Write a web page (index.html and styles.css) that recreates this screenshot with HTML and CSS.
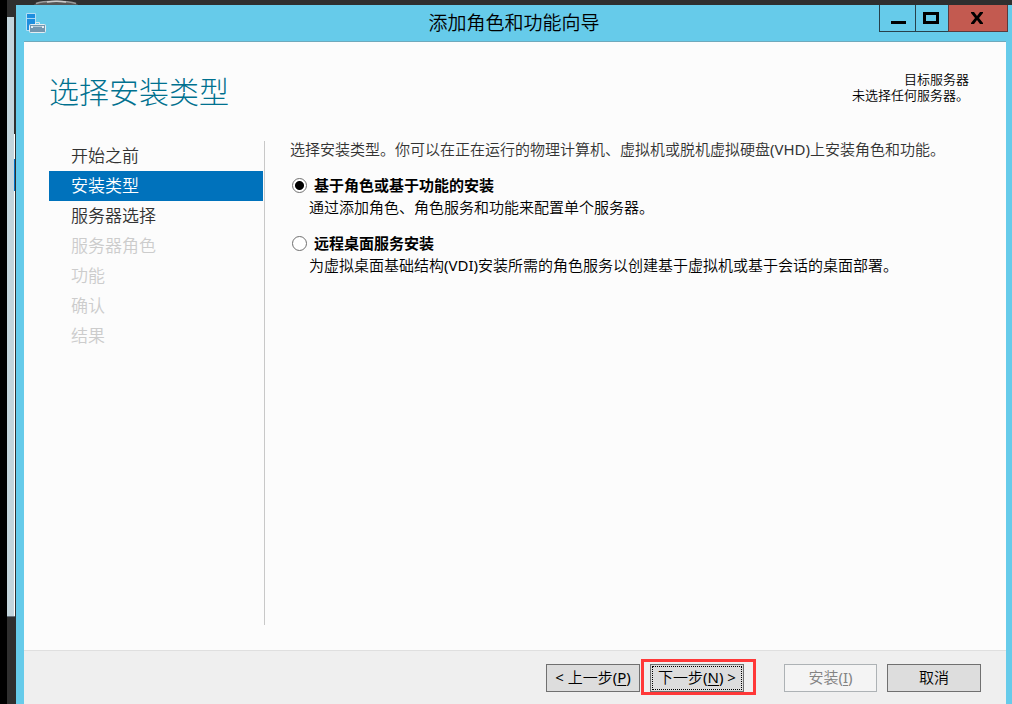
FILE: index.html
```html
<!DOCTYPE html>
<html lang="zh-CN">
<head>
  <meta charset="UTF-8" />
  <title>添加角色和功能向导</title>
  <link rel="stylesheet" href="styles.css">
</head>
<body>

  <div class="desktop">
    <div class="back">
      <div class="back-window"></div>
      <svg class="back-arc" width="46" height="5" viewBox="0 0 46 5">
        <ellipse cx="23" cy="5" rx="22" ry="4" fill="#555"/>
        <path d="M3 3.500C10 .5 34 .5 43 3.500" fill="none" stroke="#999" stroke-width="1.500"/>
        <path d="M14 2C20 1 28 1 33 2" fill="none" stroke="#ccc" stroke-width="1.500"/>
      </svg>
    </div>

    <div class="window">
      <header class="titlebar">
        <svg class="app-icon" width="20" height="20" viewBox="0 0 20 20">
          <path d="M.5.5h9v17h-9z" fill="#1e8ede" stroke="#b4def5"/>
          <path d="M1 5.500h8" stroke="#a8d8f5"/>
          <path d="M9.500 12V9.500h4V12" fill="none" stroke="#dbe8ef"/>
          <rect x="3.500" y="11.500" width="16" height="8" rx="1" fill="#7397b0" stroke="#e4edf2"/>
          <path d="M5 13.500h13" stroke="#b4cad6"/>
          <path d="M5 13h2v2H5zM16 13h2v2h-2z" fill="#e4edf2"/>
        </svg>
        <h1 class="window-title">添加角色和功能向导</h1>
        <div class="controls">
          <button class="control" type="button" aria-label="最小化">
            <svg width="16" height="14" viewBox="0 0 16 14"><path d="M1 10h15v3H1z"/></svg>
          </button>
          <button class="control" type="button" aria-label="最大化">
            <svg width="16" height="14" viewBox="0 0 16 14"><path d="M1.500 2.500h13v9h-13z" fill="none" stroke="#000" stroke-width="3"/></svg>
          </button>
          <button class="control control-close" type="button" aria-label="关闭">
            <svg width="14" height="14" viewBox="0 0 14 14"><path d="M1 1h3l3 4 3-4h3v1L9 7l4 5v1h-3L7 9l-3 4H1v-1l4-5-4-5z"/></svg>
          </button>
        </div>
      </header>

      <form class="wizard">
        <div class="heading">
          <h2>选择安装类型</h2>
          <p class="target">目标服务器<br>未选择任何服务器。</p>
        </div>

        <div class="content">
          <nav class="steps">
            <a class="step" href="#">开始之前</a>
            <a class="step active" href="#">安装类型</a>
            <a class="step" href="#">服务器选择</a>
            <a class="step disabled">服务器角色</a>
            <a class="step disabled">功能</a>
            <a class="step disabled">确认</a>
            <a class="step disabled">结果</a>
          </nav>

          <main class="page">
            <p class="intro">选择安装类型。你可以在正在运行的物理计算机、虚拟机或脱机虚拟硬盘(VHD)上安装角色和功能。</p>
            <div class="option">
              <input type="radio" name="type" id="role" checked>
              <label for="role">基于角色或基于功能的安装</label>
              <p>通过添加角色、角色服务和功能来配置单个服务器。</p>
            </div>
            <div class="option">
              <input type="radio" name="type" id="rds">
              <label for="rds">远程桌面服务安装</label>
              <p>为虚拟桌面基础结构(VDI)安装所需的角色服务以创建基于虚拟机或基于会话的桌面部署。</p>
            </div>
          </main>
        </div>

        <footer class="buttons">
          <button class="btn" type="button">&lt; 上一步(<u>P</u>)</button>
          <div class="marked">
            <button class="btn btn-focus" type="button">下一步(<u>N</u>) &gt;</button>
          </div>
          <button class="btn btn-install" type="button" disabled>安装(<u>I</u>)</button>
          <button class="btn" type="button">取消</button>
        </footer>
      </form>
    </div>
  </div>

</body>
</html>
```

FILE: styles.css
```css
*,
*::after {
  box-sizing: border-box;
}

body {
  margin: 0;
  font-family: "Noto Sans", "Noto Sans CJK SC DemiLight", "Noto Sans CJK SC", sans-serif;
  font-size: 15px;
  line-height: 22px;
  color: #000;
  background: #2f2f2f;
}

h1, h2, p {
  margin: 0;
  font-weight: inherit;
}

.desktop {
  display: flex;
  min-height: 100vh;
  padding-top: 5px;
  border-left: 7px solid #000;
}

/* window behind the wizard */
.back {
  width: 9px;
  padding-top: 12px;
}

.back-window {
  width: 8px;
  height: 600px;
  background: linear-gradient(#2f2f2f 0 117px, #fff 117px 142px, #0072c6 142px 174px, #fff 174px) right / 1px 100% no-repeat #c3d5dc;
  border-bottom: 1px solid #66717a;
}

.back-arc {
  position: absolute;
  top: 0;
  left: 33px;
}

.window {
  flex: 1;
  display: flex;
  flex-direction: column;
  padding: 0 6px 0 8px;
  background: #66cbea;
}

/* title bar */
.titlebar {
  display: grid;
  grid-template-columns: 1fr auto 1fr;
  height: 36px;
  margin-right: -2px;
}

.app-icon {
  margin: 8px 2px;
}

.window-title {
  padding-right: 4px;
  font-size: 19px;
  font-weight: 350;
  line-height: 36px;
}

.controls {
  display: flex;
  justify-self: end;
}

.control {
  display: flex;
  align-items: center;
  justify-content: center;
  width: 37px;
  height: 27px;
  padding: 0;
  background: #66cbea;
  border: 1px solid #27414b;
  border-top: 0;
}

.control + .control {
  width: 34px;
  padding-right: 2px;
  margin-left: -1px;
}

.control + .control-close {
  width: 60px;
  background: #c35a50;
  border-color: #5b3a3c;
}

/* wizard */
.wizard {
  flex: 1;
  display: flex;
  flex-direction: column;
  background: #fcfcfc;
  border-top: 1px solid #6fa9bc;
}

.heading {
  display: flex;
  justify-content: space-between;
  padding: 28px 37px 0 25px;
  height: 99px;
}

.heading h2 {
  font-family: "Noto Sans CJK SC", sans-serif;
  font-size: 30px;
  font-weight: 300;
  line-height: 40px;
  color: #00718f;
}

.target {
  padding-top: 1px;
  font-size: 13px;
  font-weight: 350;
  line-height: 16px;
  text-align: right;
}

.content {
  flex: 1;
  display: flex;
  padding: 0 25px;
  margin-bottom: 25px;
}

.steps {
  width: 216px;
  padding-right: 1px;
  border-right: 1px solid #c8c8c8;
}

.step {
  display: block;
  padding-left: 22px;
  font-size: 17px;
  font-weight: 350;
  line-height: 30px;
  color: #333;
  text-decoration: none;
}

.step.active {
  color: #fff;
  background: #0072bc;
}

.step.disabled {
  color: #ccc;
}

.page {
  flex: 1;
  padding-left: 25px;
}

.intro {
  margin-bottom: 17px;
  line-height: 16px;
  color: #333;
}

.option {
  display: grid;
  grid-template-columns: 19px 1fr;
  align-items: center;
  margin-bottom: 14px;
}

.option input {
  appearance: none;
  width: 15px;
  height: 15px;
  margin: 0 2px;
  background: #fff;
  border: 1px solid #707070;
  border-radius: 50%;
}

.option input:checked {
  background: radial-gradient(circle, #000 4px, #fff 5px);
}

.option label {
  padding-left: 5px;
  font-family: "Noto Sans CJK SC", sans-serif;
  font-weight: bold;
}

.option p {
  grid-column: 2;
}

/* bottom buttons */
.buttons {
  display: flex;
  justify-content: flex-end;
  gap: 10px;
  height: 54px;
  padding: 13px 25px 0;
  background: #efefef;
  border-top: 1px solid #dfdfdf;
}

.btn {
  width: 94px;
  height: 28px;
  padding: 0 0 2px;
  font-family: inherit;
  font-size: 15px;
  line-height: 22px;
  color: #000;
  white-space: nowrap;
  background: #ddd;
  border: 1px solid #707070;
}

.btn u {
  text-underline-offset: 2px;
}

.btn-focus {
  outline: 1px dotted #000;
  outline-offset: -3px;
}

.btn-install {
  width: 93px;
  margin-left: 30px;
  color: #838383;
  background: #f4f4f4;
  border-color: #adb2b5;
}

.marked {
  position: relative;
}

.marked::after {
  content: "";
  position: absolute;
  top: -5px;
  left: -9px;
  width: 115px;
  height: 36px;
  border: 3px solid #ff3838;
  pointer-events: none;
}
```
